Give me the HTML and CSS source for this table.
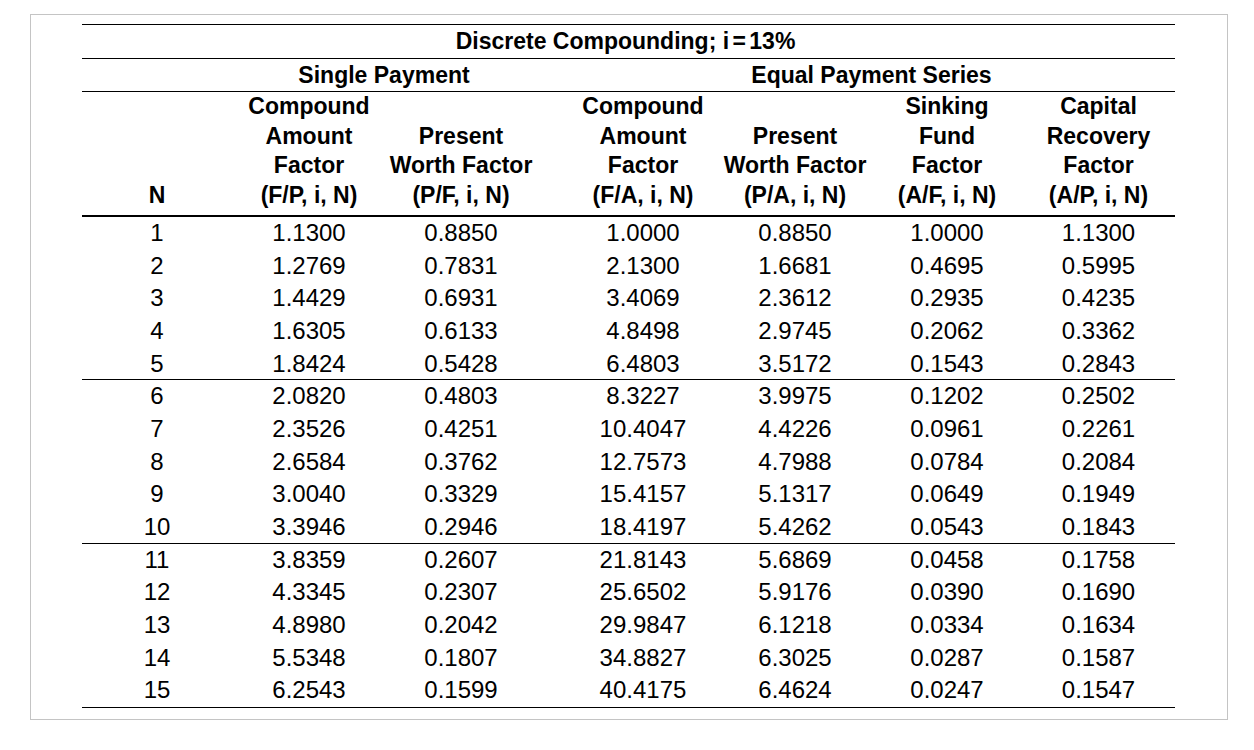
FILE: index.html
```html
<!DOCTYPE html>
<html>
<head>
<meta charset="utf-8">
<link rel="stylesheet" href="styles.css">
</head>
<body>
<div class="frame">
  <div class="factor-table">
    <div class="title">Discrete Compounding; <span class="rate">i = 13%</span></div>
    <div class="groups cols">
      <div class="group single">Single Payment</div>
      <div class="group equal">Equal Payment Series</div>
    </div>
    <div class="head cols">
      <div class="hcell"><span>N</span></div>
      <div class="hcell"><span>Compound</span><span>Amount</span><span>Factor</span><span>(F/P, i, N)</span></div>
      <div class="hcell"><span>Present</span><span>Worth Factor</span><span>(P/F, i, N)</span></div>
      <div class="hcell c3"><span>Compound</span><span>Amount</span><span>Factor</span><span>(F/A, i, N)</span></div>
      <div class="hcell"><span>Present</span><span>Worth Factor</span><span>(P/A, i, N)</span></div>
      <div class="hcell"><span>Sinking</span><span>Fund</span><span>Factor</span><span>(A/F, i, N)</span></div>
      <div class="hcell"><span>Capital</span><span>Recovery</span><span>Factor</span><span>(A/P, i, N)</span></div>
    </div>
    <div class="rows">
      <div class="row cols"><span>1</span><span>1.1300</span><span>0.8850</span><span class="c3">1.0000</span><span>0.8850</span><span>1.0000</span><span>1.1300</span></div>
      <div class="row cols"><span>2</span><span>1.2769</span><span>0.7831</span><span class="c3">2.1300</span><span>1.6681</span><span>0.4695</span><span>0.5995</span></div>
      <div class="row cols"><span>3</span><span>1.4429</span><span>0.6931</span><span class="c3">3.4069</span><span>2.3612</span><span>0.2935</span><span>0.4235</span></div>
      <div class="row cols"><span>4</span><span>1.6305</span><span>0.6133</span><span class="c3">4.8498</span><span>2.9745</span><span>0.2062</span><span>0.3362</span></div>
      <div class="row cols sep"><span>5</span><span>1.8424</span><span>0.5428</span><span class="c3">6.4803</span><span>3.5172</span><span>0.1543</span><span>0.2843</span></div>
      <div class="row cols"><span>6</span><span>2.0820</span><span>0.4803</span><span class="c3">8.3227</span><span>3.9975</span><span>0.1202</span><span>0.2502</span></div>
      <div class="row cols"><span>7</span><span>2.3526</span><span>0.4251</span><span class="c3">10.4047</span><span>4.4226</span><span>0.0961</span><span>0.2261</span></div>
      <div class="row cols"><span>8</span><span>2.6584</span><span>0.3762</span><span class="c3">12.7573</span><span>4.7988</span><span>0.0784</span><span>0.2084</span></div>
      <div class="row cols"><span>9</span><span>3.0040</span><span>0.3329</span><span class="c3">15.4157</span><span>5.1317</span><span>0.0649</span><span>0.1949</span></div>
      <div class="row cols sep"><span>10</span><span>3.3946</span><span>0.2946</span><span class="c3">18.4197</span><span>5.4262</span><span>0.0543</span><span>0.1843</span></div>
      <div class="row cols"><span>11</span><span>3.8359</span><span>0.2607</span><span class="c3">21.8143</span><span>5.6869</span><span>0.0458</span><span>0.1758</span></div>
      <div class="row cols"><span>12</span><span>4.3345</span><span>0.2307</span><span class="c3">25.6502</span><span>5.9176</span><span>0.0390</span><span>0.1690</span></div>
      <div class="row cols"><span>13</span><span>4.8980</span><span>0.2042</span><span class="c3">29.9847</span><span>6.1218</span><span>0.0334</span><span>0.1634</span></div>
      <div class="row cols"><span>14</span><span>5.5348</span><span>0.1807</span><span class="c3">34.8827</span><span>6.3025</span><span>0.0287</span><span>0.1587</span></div>
      <div class="row cols"><span>15</span><span>6.2543</span><span>0.1599</span><span class="c3">40.4175</span><span>6.4624</span><span>0.0247</span><span>0.1547</span></div>
    </div>
  </div>
</div>
</body>
</html>
```

FILE: styles.css
```css
html, body {
  margin: 0;
  padding: 0;
  background: #ffffff;
}

body {
  font-family: "Liberation Sans", Arial, sans-serif;
  color: #000000;
}

.frame {
  margin: 14px 0 0 30px;
  border: 1px solid #c4c4c4;
  padding: 9px 0 0 51px;
  box-sizing: content-box;
  width: 1145px;
  height: 695px;
}

.factor-table {
  width: 1093px;
  border-top: 1px solid #000;
  border-bottom: 1px solid #000;
}

.cols {
  display: grid;
  grid-template-columns: 150px 154px 150px 182px 154px 150px 153px;
}

.title {
  height: 33px;
  line-height: 33px;
  text-align: center;
  font-weight: bold;
  font-size: 23px;
  border-bottom: 1px solid #000;
  padding-right: 6px;
}

.rate {
  word-spacing: -3px;
}

.groups {
  height: 32px;
  line-height: 32px;
  font-weight: bold;
  font-size: 23px;
  border-bottom: 1px solid #000;
}

.group {
  text-align: center;
  white-space: nowrap;
}

.group.single {
  grid-column: 2 / 4;
}

.group.equal {
  grid-column: 4 / 8;
  padding-left: 32px;
}

.head {
  height: 125px;
  padding-bottom: 6px;
  box-sizing: border-box;
  border-bottom: 2px solid #000;
  font-weight: bold;
  font-size: 23px;
  line-height: 29.7px;
}

.hcell {
  display: flex;
  flex-direction: column;
  justify-content: flex-end;
  align-items: center;
  white-space: nowrap;
}

.hcell.c3 {
  padding-left: 32px;
}

.rows {
  font-size: 24px;
}

.row {
  height: 32.67px;
  line-height: 32.67px;
  box-sizing: border-box;
}

.row > span {
  text-align: center;
  white-space: nowrap;
}

.row > span.c3 {
  padding-left: 32px;
}

.row.sep {
  border-bottom: 1px solid #000;
}
```
